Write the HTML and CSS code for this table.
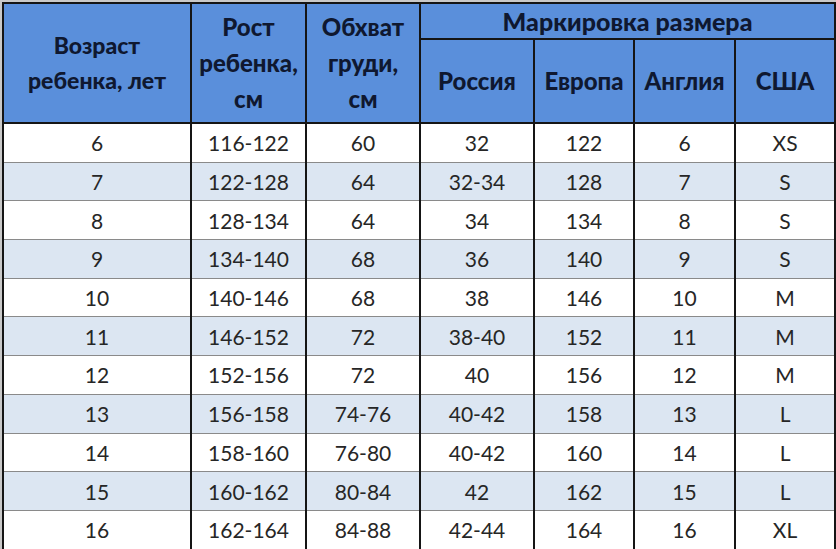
FILE: index.html
```html
<!DOCTYPE html>
<html lang="ru">
<head>
<meta charset="utf-8">
<title>Размеры</title>
<link rel="stylesheet" href="styles.css">
</head>
<body>
<table class="sizes">
  <colgroup>
    <col class="c1"><col class="c2"><col class="c3"><col class="c4"><col class="c5"><col class="c6"><col class="c7">
  </colgroup>
  <thead>
    <tr class="h1">
      <th rowspan="2" class="age">Возраст<br>ребенка, лет</th>
      <th rowspan="2" class="tall">Рост<br>ребенка,<br>см</th>
      <th rowspan="2" class="tall">Обхват<br>груди,<br>см</th>
      <th colspan="4" class="group">Маркировка размера</th>
    </tr>
    <tr class="h2">
      <th>Россия</th><th>Европа</th><th>Англия</th><th>США</th>
    </tr>
  </thead>
  <tbody>
    <tr><td>6</td><td>116-122</td><td>60</td><td>32</td><td>122</td><td>6</td><td>XS</td></tr>
    <tr class="alt"><td>7</td><td>122-128</td><td>64</td><td>32-34</td><td>128</td><td>7</td><td>S</td></tr>
    <tr><td>8</td><td>128-134</td><td>64</td><td>34</td><td>134</td><td>8</td><td>S</td></tr>
    <tr class="alt"><td>9</td><td>134-140</td><td>68</td><td>36</td><td>140</td><td>9</td><td>S</td></tr>
    <tr><td>10</td><td>140-146</td><td>68</td><td>38</td><td>146</td><td>10</td><td>M</td></tr>
    <tr class="alt"><td>11</td><td>146-152</td><td>72</td><td>38-40</td><td>152</td><td>11</td><td>M</td></tr>
    <tr><td>12</td><td>152-156</td><td>72</td><td>40</td><td>156</td><td>12</td><td>M</td></tr>
    <tr class="alt"><td>13</td><td>156-158</td><td>74-76</td><td>40-42</td><td>158</td><td>13</td><td>L</td></tr>
    <tr><td>14</td><td>158-160</td><td>76-80</td><td>40-42</td><td>160</td><td>14</td><td>L</td></tr>
    <tr class="alt"><td>15</td><td>160-162</td><td>80-84</td><td>42</td><td>162</td><td>15</td><td>L</td></tr>
    <tr><td>16</td><td>162-164</td><td>84-88</td><td>42-44</td><td>164</td><td>16</td><td>XL</td></tr>
  </tbody>
</table>
</body>
</html>
```
FILE: styles.css
```css
html, body {
  margin: 0;
  padding: 0;
  background: #c9c9c9;
}
body {
  width: 836px;
  height: 549px;
  overflow: hidden;
}
.sizes {
  margin: 2px 0 0 2px;
  width: 832px;
  border-collapse: collapse;
  table-layout: fixed;
  font-family: Lato, "Open Sans", sans-serif;
  background: #ffffff;
}
.c1 { width: 188px; }
.c2 { width: 115px; }
.c3 { width: 114px; }
.c4 { width: 114px; }
.c5 { width: 100px; }
.c6 { width: 101px; }
.c7 { width: 100px; }

th {
  background: #5a8fdb;
  color: #0f1830;
  font-weight: 900;
  font-size: 24px;
  line-height: 34px;
  border: 2px solid #151515;
  padding: 0;
  text-align: center;
  vertical-align: middle;
  white-space: nowrap;
}
th.age { font-size: 23px; line-height: 35px; }
th.tall { line-height: 36px; }
.h1 { height: 36px; }
th.group { line-height: 30px; font-size: 25px; }
.h2 { height: 84px; }

td {
  height: 37.7px;
  padding: 0;
  text-align: center;
  vertical-align: middle;
  font-size: 21px;
  color: #262626;
  border-left: 2px solid #151515;
  border-right: 2px solid #151515;
  border-top: 1px solid #8a8a8a;
  border-bottom: 1px solid #8a8a8a;
}
tbody tr:last-child td { border-bottom: 2px solid #151515; }
tr.alt td { background: #dce6f2; }
```
